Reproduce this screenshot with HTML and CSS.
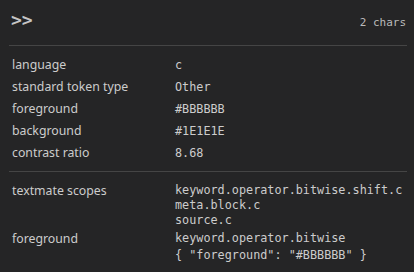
FILE: index.html
```html
<!DOCTYPE html>
<html lang="en">
<head>
    <meta charset="UTF-8">
    <title>Inspect Tokens</title>
    <link rel="stylesheet" href="styles.css">
</head>
<body>
    <div class="inspect-widget">
        <!-- token under cursor -->
        <div class="token-head">
            <span class="token">&gt;&gt;</span>
            <span class="token-length">2 chars</span>
        </div>
        <hr class="separator">

        <!-- basic metadata -->
        <div class="meta-table">
            <div class="meta-key">language</div>
            <div class="meta-value">c</div>
            <div class="meta-key">standard token type</div>
            <div class="meta-value">Other</div>
            <div class="meta-key">foreground</div>
            <div class="meta-value">#BBBBBB</div>
            <div class="meta-key">background</div>
            <div class="meta-value">#1E1E1E</div>
            <div class="meta-key">contrast ratio</div>
            <div class="meta-value">8.68</div>
        </div>
        <hr class="separator second">

        <!-- textmate info -->
        <div class="meta-table scopes">
            <div class="meta-key">textmate scopes</div>
            <ul class="meta-values">
                <li>keyword.operator.bitwise.shift.c</li>
                <li>meta.block.c</li>
                <li>source.c</li>
            </ul>
            <div class="meta-key">foreground</div>
            <div class="meta-value">
                keyword.operator.bitwise<br>
                <code class="theme-rule">{ "foreground": "#BBBBBB" }</code>
            </div>
        </div>
    </div>
</body>
</html>
```

FILE: styles.css
```css
body {
    margin: 0;
    background-color: #252526;
    color: #cccccc;
    font-family: "Noto Sans", "Open Sans", sans-serif;
    font-size: 12.3px;
}

.inspect-widget {
    padding: 10px 7px 0 9px;
}

.token-head {
    display: flex;
    align-items: baseline;
    justify-content: space-between;
    padding-left: 2px;
}

.token {
    font-family: "DejaVu Sans Mono", monospace;
    font-weight: bold;
    font-size: 18px;
    line-height: 20px;
    color: #c5c5c5;
}

.token-length {
    font-family: "DejaVu Sans Mono", monospace;
    font-size: 11px;
    color: #bbbbbb;
    padding-right: 1px;
}

.separator {
    height: 1px;
    border: 0;
    margin: 15px 0 8px;
    background-color: #454545;
}

.separator.second {
    margin: 7px 0 11px;
}

.meta-table {
    display: grid;
    grid-template-columns: 163px 1fr;
    padding-left: 3px;
    line-height: 22px;
}

.meta-value,
.meta-values {
    font-family: "DejaVu Sans Mono", monospace;
    font-size: 11.8px;
}

.scopes {
    line-height: 15px;
    row-gap: 3px;
}

.meta-values {
    list-style: none;
    margin: 0;
    padding: 0;
}

.theme-rule {
    display: inline-block;
    margin-top: 2px;
    font-family: "DejaVu Sans Mono", monospace;
    font-size: 11.8px;
}
```
